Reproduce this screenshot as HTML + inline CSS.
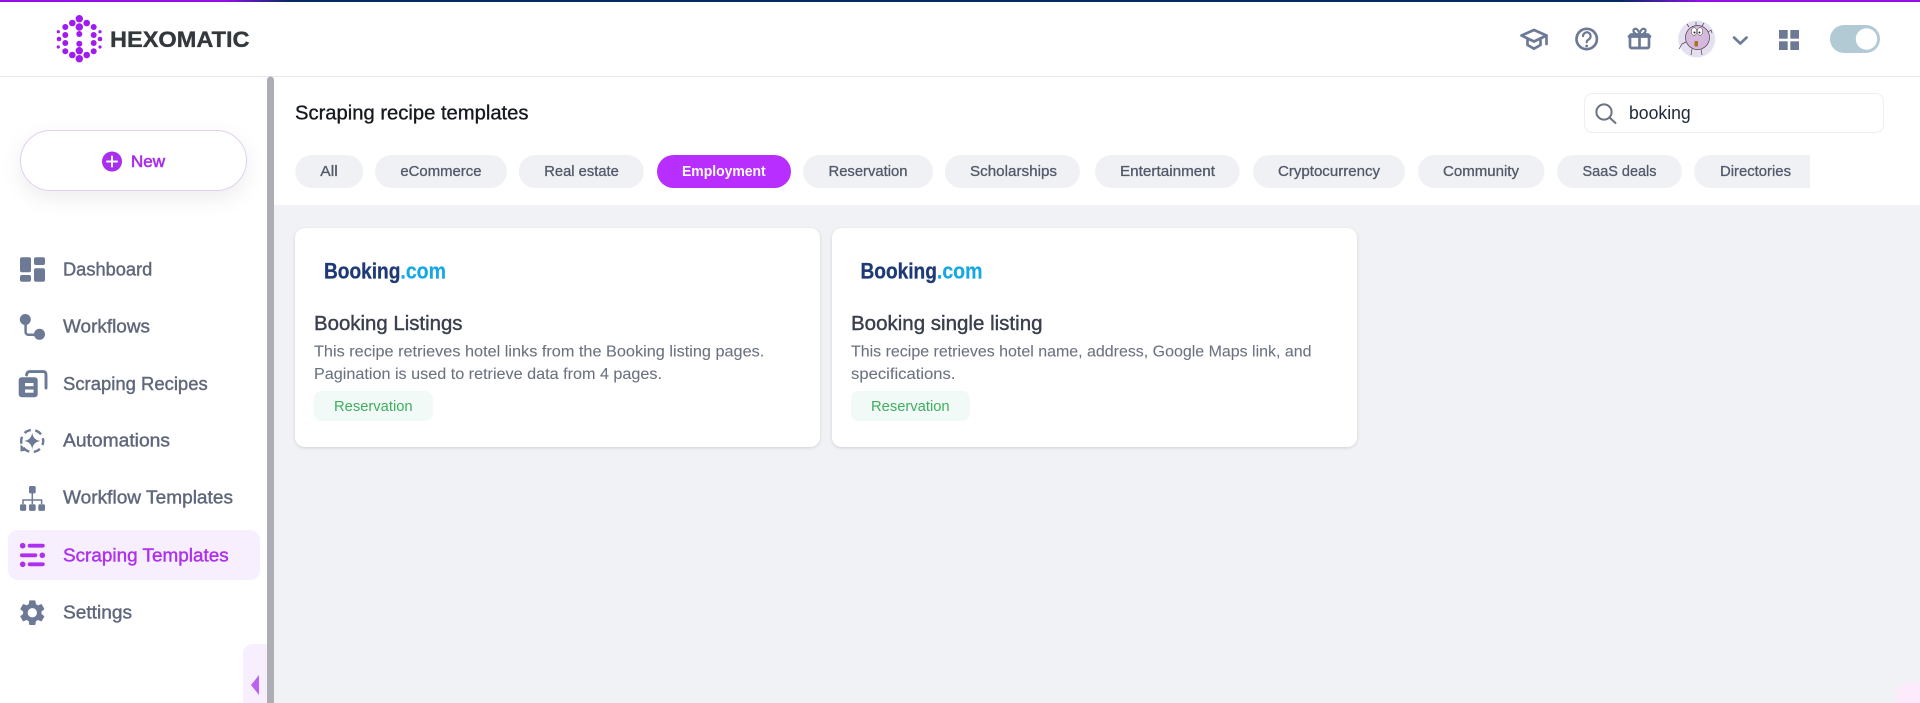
<!DOCTYPE html>
<html lang="en">
<head>
<meta charset="utf-8">
<title>Scraping recipe templates</title>
<style>
html,body{margin:0;padding:0;width:1920px;height:703px;overflow:hidden;background:#fff}
svg{display:block}
text{font-family:"Liberation Sans",Arial,sans-serif;white-space:pre}
.nav{font-size:18px;fill:#5f677b;stroke:#5f677b;stroke-width:.4}
.ic{fill:#6c7a96}
.chip{font-size:14.5px;fill:#525a6a;stroke:#525a6a;stroke-width:.3}
.d{font-size:16px;fill:#6b7280;stroke:#6b7280;stroke-width:.08}
.t{font-size:20px;fill:#3a3f4d;stroke:#3a3f4d;stroke-width:.4}
.tag{font-size:14.5px;fill:#3fae5f}
.bk{font-size:22px;font-weight:bold;fill:#1e3a75;stroke:#1e3a75;stroke-width:.3}
.bc{font-size:22px;font-weight:bold;fill:#14a8e6;stroke:#14a8e6;stroke-width:.2}
</style>
</head>
<body>
<svg width="1920" height="703" viewBox="0 0 1920 703" xmlns="http://www.w3.org/2000/svg">
<defs>
<linearGradient id="top" x1="0" x2="1920" y1="0" y2="0" gradientUnits="userSpaceOnUse">
<stop offset="0" stop-color="#8f10e8"/><stop offset=".118" stop-color="#8f10e8"/>
<stop offset=".15" stop-color="#062a64"/><stop offset=".845" stop-color="#062a64"/>
<stop offset=".885" stop-color="#8f10e8"/><stop offset="1" stop-color="#8f10e8"/>
</linearGradient>
<filter id="sh" x="-20%" y="-50%" width="140%" height="220%"><feDropShadow dx="0" dy="7" stdDeviation="10" flood-color="#000" flood-opacity=".07"/></filter>
<filter id="cs" x="-5%" y="-5%" width="110%" height="110%"><feDropShadow dx="0" dy="1" stdDeviation="1.5" flood-color="#000" flood-opacity=".14"/></filter>
<filter id="bl"><feGaussianBlur stdDeviation="3"/></filter>
<clipPath id="chips"><rect x="290" y="150" width="1520" height="44"/></clipPath>
</defs>

<rect width="1920" height="703" fill="#fff"/>
<rect width="1920" height="2" fill="url(#top)"/>

<!-- header -->
<rect x="0" y="76" width="1920" height="1" fill="#e8e8ec"/>
<g fill="#a01bf0">
<circle cx="79.3" cy="18.7" r="3.7"/><circle cx="72.3" cy="23" r="3.3"/><circle cx="86.7" cy="23" r="3.3"/><circle cx="79.3" cy="27" r="3.7"/>
<circle cx="65.3" cy="27" r="3"/><circle cx="93.7" cy="27" r="3"/><circle cx="58.3" cy="31.7" r="1.6"/><circle cx="100" cy="31.7" r="1.6"/>
<circle cx="65.3" cy="35" r="3"/><circle cx="79.3" cy="34" r="3"/><circle cx="93.7" cy="35" r="3"/><circle cx="59" cy="39" r="2.3"/><circle cx="100" cy="39" r="2.3"/>
<circle cx="65.3" cy="43" r="3"/><circle cx="79.3" cy="43.7" r="3"/><circle cx="93.7" cy="43" r="3"/><circle cx="58.3" cy="47" r="1.6"/><circle cx="100" cy="47" r="1.6"/>
<circle cx="65.3" cy="51.3" r="3"/><circle cx="93.7" cy="51.3" r="3"/><circle cx="79.3" cy="50.7" r="3.7"/><circle cx="72.3" cy="55" r="3.3"/><circle cx="86.7" cy="55" r="3.3"/><circle cx="79.3" cy="58.7" r="3.7"/>
</g>
<text x="110" y="47" font-size="22.5" font-weight="bold" fill="#33383d" stroke="#33383d" stroke-width=".35" textLength="139.5" lengthAdjust="spacingAndGlyphs">HEXOMATIC</text>

<!-- header right icons -->
<g fill="none" stroke="#6c7a96" stroke-width="2.7" stroke-linejoin="round" stroke-linecap="round">
<path d="M1521.5 35.5L1534 30L1546.5 35.5L1534 41.5Z"/>
<path d="M1527.5 39.5V45L1534 48.7L1540.5 45V39.5"/>
<path d="M1546.5 36V44"/>
<circle cx="1586.7" cy="39" r="10.2"/>
<path d="M1583 36.2a3.8 3.8 0 1 1 5.9 3.1c-1.3.8-2.2 1.5-2.2 3" stroke-width="2.2"/>
<rect x="1630" y="34.5" width="19" height="13.5" rx="1.5"/>
<path d="M1629 36.5h21M1639.5 34v14"/>
<path d="M1639.5 33.5c-1-3.5-3-5.2-4.8-4.6-1.9.7-1.6 3.6.8 4.6M1639.5 33.5c1-3.5 3-5.2 4.8-4.6 1.9.7 1.6 3.6-.8 4.6" stroke-width="2.2"/>
<path d="M1734 37.5L1740.3 43.5L1746.6 37.5" stroke-width="2.6"/>
</g>
<circle cx="1586.7" cy="46" r="1.4" fill="#6c7a96"/>
<!-- avatar -->
<circle cx="1696.7" cy="39" r="18.5" fill="#e5e0f0"/>
<ellipse cx="1697.5" cy="37.5" rx="12" ry="12" fill="#d5b9dc" stroke="#4a3a4a" stroke-width=".7"/>
<ellipse cx="1694" cy="31.5" rx="2.8" ry="3.8" fill="#fff" stroke="#333" stroke-width=".5"/>
<ellipse cx="1700" cy="31.5" rx="2.8" ry="3.8" fill="#fff" stroke="#333" stroke-width=".5"/>
<circle cx="1694.5" cy="32.5" r="1" fill="#222"/><circle cx="1699.5" cy="32.5" r="1" fill="#222"/>
<rect x="1694.5" y="41" width="3.5" height="5.5" rx="1" fill="#a5721f"/>
<path d="M1686 42l-4 2-3 5M1692 49l-1 6M1701 49l1 6M1708 32l3-2 1 3M1689 27l-2-3M1696 25v-3M1702 26l2-3" fill="none" stroke="#4a3a4a" stroke-width=".7"/>
<g class="ic">
<rect x="1779" y="30" width="8.7" height="8.7"/><rect x="1790.3" y="30" width="8.7" height="8.7"/>
<rect x="1779" y="41.3" width="8.7" height="8.7"/><rect x="1790.3" y="41.3" width="8.7" height="8.7"/>
</g>
<rect x="1830" y="25" width="50" height="28" rx="14" fill="#b2cad4"/>
<circle cx="1866.5" cy="39" r="10.7" fill="#fff"/>

<!-- sidebar -->
<rect x="20.5" y="130.5" width="226" height="60" rx="30" fill="#fff" stroke="#e2cff2" filter="url(#sh)"/>
<circle cx="112" cy="161.5" r="10" fill="#a92ff0"/>
<path d="M112 156.5v10M107 161.5h10" stroke="#fff" stroke-width="2" stroke-linecap="round"/>
<text x="131" y="166.8" font-size="16.5" fill="#a92ff0" stroke="#a92ff0" stroke-width=".6" textLength="34" lengthAdjust="spacingAndGlyphs">New</text>

<g class="ic">
<rect x="20" y="257.3" width="11" height="15" rx="2"/><rect x="20" y="275" width="11" height="6.7" rx="2"/>
<rect x="34" y="257.3" width="11" height="7.7" rx="2"/><rect x="34" y="268.3" width="11" height="13.4" rx="2"/>
<circle cx="25.3" cy="319.5" r="5.5"/><circle cx="39.5" cy="334.3" r="5.5"/>
<path d="M25.6 322v10a2.8 2.8 0 0 0 2.8 2.8H36" fill="none" stroke="#6c7a96" stroke-width="2.5"/>
<rect x="18.7" y="377.3" width="19" height="20" rx="3"/>
<path d="M26.5 375q.5-3.4 3.5-3.4H43q3 0 3 3V388" fill="none" stroke="#6c7a96" stroke-width="2.9" stroke-linecap="round"/>
<rect x="25" y="383" width="8.5" height="3.2" fill="#fff"/><rect x="25" y="389.5" width="8.5" height="3.2" fill="#fff"/>
<path d="M32.2 432.8Q33.2 440 40.4 441Q33.2 442 32.2 449.2Q31.2 442 24 441Q31.2 440 32.2 432.8Z"/>
<circle cx="32.2" cy="441" r="11" fill="none" stroke="#6c7a96" stroke-width="2.4" stroke-dasharray="7 4.5" transform="rotate(-15 32.2 441)"/>
<path d="M20.5 444.5v7l6.5-1z"/>
<rect x="29" y="486" width="6.7" height="7.4" rx="1.6"/>
<path d="M32.3 493v7M23 504v-4h18.6v4M32.3 500v4" fill="none" stroke="#6c7a96" stroke-width="1.5"/>
<rect x="20" y="504.3" width="6.2" height="6.6" rx="1.6"/><rect x="29" y="504.3" width="6.7" height="6.6" rx="1.6"/><rect x="38.3" y="504.3" width="6.7" height="6.6" rx="1.6"/>
<path transform="translate(16.9 597.3) scale(1.285)" d="M19.14 12.94c.04-.3.06-.61.06-.94 0-.32-.02-.64-.07-.94l2.03-1.58a.49.49 0 0 0 .12-.61l-1.92-3.32a.488.488 0 0 0-.59-.22l-2.39.96c-.5-.38-1.03-.7-1.62-.94l-.36-2.54a.484.484 0 0 0-.48-.41h-3.84c-.24 0-.43.17-.47.41l-.36 2.54c-.59.24-1.13.57-1.62.94l-2.39-.96c-.22-.08-.47 0-.59.22L2.74 8.87c-.12.21-.08.47.12.61l2.03 1.58c-.05.3-.09.63-.09.94s.02.64.07.94l-2.03 1.58a.49.49 0 0 0-.12.61l1.92 3.32c.12.22.37.29.59.22l2.39-.96c.5.38 1.03.7 1.62.94l.36 2.54c.05.24.24.41.48.41h3.84c.24 0 .44-.17.47-.41l.36-2.54c.59-.24 1.13-.56 1.62-.94l2.39.96c.22.08.47 0 .59-.22l1.92-3.32c.12-.22.07-.47-.12-.61l-2.01-1.58zM12 15.6c-1.98 0-3.6-1.62-3.6-3.6s1.62-3.6 3.6-3.6 3.6 1.62 3.6 3.6-1.62 3.6-3.6 3.6z"/>
</g>
<text class="nav" x="63" y="275.7" textLength="89.3" lengthAdjust="spacingAndGlyphs">Dashboard</text>
<text class="nav" x="63" y="332.7" textLength="87" lengthAdjust="spacingAndGlyphs">Workflows</text>
<text class="nav" x="63" y="390" textLength="144.7" lengthAdjust="spacingAndGlyphs">Scraping Recipes</text>
<text class="nav" x="63" y="446.7" textLength="107" lengthAdjust="spacingAndGlyphs">Automations</text>
<text class="nav" x="63" y="503.3" textLength="170" lengthAdjust="spacingAndGlyphs">Workflow Templates</text>

<rect x="8" y="530" width="252" height="50" rx="10" fill="#f8effe"/>
<g fill="#ad2ff0">
<circle cx="22.7" cy="545.7" r="2.8"/><rect x="27.7" y="543.8" width="17" height="3.8" rx="1.9"/>
<rect x="20" y="553.4" width="17.3" height="3.8" rx="1.9"/><circle cx="42.3" cy="555.3" r="2.8"/>
<circle cx="22.7" cy="564.3" r="2.8"/><rect x="27.7" y="562.4" width="17" height="3.8" rx="1.9"/>
</g>
<text x="63" y="561.7" font-size="18" fill="#ad2ff0" stroke="#ad2ff0" stroke-width=".4" textLength="165.7" lengthAdjust="spacingAndGlyphs">Scraping Templates</text>
<text class="nav" x="63" y="618.7" textLength="69" lengthAdjust="spacingAndGlyphs">Settings</text>

<path d="M267 644H253a10 10 0 0 0-10 10V703H267Z" fill="#f8effe"/>
<path d="M259 675L251 685L259 695Z" fill="#bc62f2"/>
<path d="M267 703V80a3.5 3.5 0 0 1 7 0V703Z" fill="#adadb5"/>

<!-- main -->
<rect x="274" y="205" width="1646" height="498" fill="#f0f2f5"/>
<text x="295" y="119.5" font-size="20" fill="#15191f" stroke="#15191f" stroke-width=".35" textLength="233.5" lengthAdjust="spacingAndGlyphs">Scraping recipe templates</text>

<rect x="1584.5" y="93.5" width="299" height="39" rx="8" fill="#fff" stroke="#eceef1"/>
<circle cx="1604" cy="112" r="7.6" fill="none" stroke="#6b7280" stroke-width="2"/>
<path d="M1609.5 117.5L1615.5 123" stroke="#6b7280" stroke-width="2" stroke-linecap="round"/>
<text x="1629" y="119" font-size="18" fill="#1f2937" textLength="61.7" lengthAdjust="spacingAndGlyphs">booking</text>

<g clip-path="url(#chips)">
<g fill="#f0f1f5">
<rect x="295.3" y="155" width="67.9" height="33" rx="16.5"/>
<rect x="375" y="155" width="132" height="33" rx="16.5"/>
<rect x="518.8" y="155" width="125" height="33" rx="16.5"/>
<rect x="803" y="155" width="130" height="33" rx="16.5"/>
<rect x="944.8" y="155" width="135.2" height="33" rx="16.5"/>
<rect x="1095" y="155" width="144.6" height="33" rx="16.5"/>
<rect x="1253" y="155" width="152" height="33" rx="16.5"/>
<rect x="1418" y="155" width="126.5" height="33" rx="16.5"/>
<rect x="1557" y="155" width="125" height="33" rx="16.5"/>
<rect x="1694" y="155" width="140" height="33" rx="16.5"/>
</g>
<rect x="657" y="155" width="134" height="33" rx="16.5" fill="#b72eff"/>
</g>
<text class="chip" x="320.3" y="176" textLength="17.4" lengthAdjust="spacingAndGlyphs">All</text>
<text class="chip" x="400.4" y="176" textLength="81.1" lengthAdjust="spacingAndGlyphs">eCommerce</text>
<text class="chip" x="544.3" y="176" textLength="74.5" lengthAdjust="spacingAndGlyphs">Real estate</text>
<text x="682" y="176" font-size="14.5" font-weight="bold" fill="#fff" textLength="83.7" lengthAdjust="spacingAndGlyphs">Employment</text>
<text class="chip" x="828.5" y="176" textLength="79" lengthAdjust="spacingAndGlyphs">Reservation</text>
<text class="chip" x="970" y="176" textLength="87" lengthAdjust="spacingAndGlyphs">Scholarships</text>
<text class="chip" x="1120" y="176" textLength="95" lengthAdjust="spacingAndGlyphs">Entertainment</text>
<text class="chip" x="1278" y="176" textLength="102" lengthAdjust="spacingAndGlyphs">Cryptocurrency</text>
<text class="chip" x="1443" y="176" textLength="76" lengthAdjust="spacingAndGlyphs">Community</text>
<text class="chip" x="1582.5" y="176" textLength="74" lengthAdjust="spacingAndGlyphs">SaaS deals</text>
<text class="chip" x="1720" y="176" textLength="71" lengthAdjust="spacingAndGlyphs">Directories</text>

<!-- card 1 -->
<rect x="295" y="228" width="525" height="219" rx="10" fill="#fff" filter="url(#cs)"/>
<text class="bk" x="324" y="278.3" textLength="76.4" lengthAdjust="spacingAndGlyphs">Booking</text>
<text class="bc" x="400.4" y="278.3" textLength="45.6" lengthAdjust="spacingAndGlyphs">.com</text>
<text class="t" x="314" y="330" textLength="148.5" lengthAdjust="spacingAndGlyphs">Booking Listings</text>
<text class="d" x="314" y="356.7" textLength="450.3" lengthAdjust="spacingAndGlyphs">This recipe retrieves hotel links from the Booking listing pages.</text>
<text class="d" x="314" y="379" textLength="348" lengthAdjust="spacingAndGlyphs">Pagination is used to retrieve data from 4 pages.</text>
<rect x="314" y="391" width="119" height="30" rx="8" fill="#f1faf6"/>
<text class="tag" x="334" y="411" textLength="78.6" lengthAdjust="spacingAndGlyphs">Reservation</text>

<!-- card 2 -->
<rect x="832" y="228" width="525" height="219" rx="10" fill="#fff" filter="url(#cs)"/>
<text class="bk" x="860.5" y="278.3" textLength="76.4" lengthAdjust="spacingAndGlyphs">Booking</text>
<text class="bc" x="936.9" y="278.3" textLength="45.6" lengthAdjust="spacingAndGlyphs">.com</text>
<text class="t" x="851" y="330" textLength="191.5" lengthAdjust="spacingAndGlyphs">Booking single listing</text>
<text class="d" x="851" y="356.7" textLength="460.5" lengthAdjust="spacingAndGlyphs">This recipe retrieves hotel name, address, Google Maps link, and</text>
<text class="d" x="851" y="379" textLength="104.5" lengthAdjust="spacingAndGlyphs">specifications.</text>
<rect x="851" y="391" width="119" height="30" rx="8" fill="#f1faf6"/>
<text class="tag" x="871" y="411" textLength="78.6" lengthAdjust="spacingAndGlyphs">Reservation</text>

<circle cx="1912" cy="697" r="16" fill="#fdeafc" filter="url(#bl)"/>
</svg>
</body>
</html>
